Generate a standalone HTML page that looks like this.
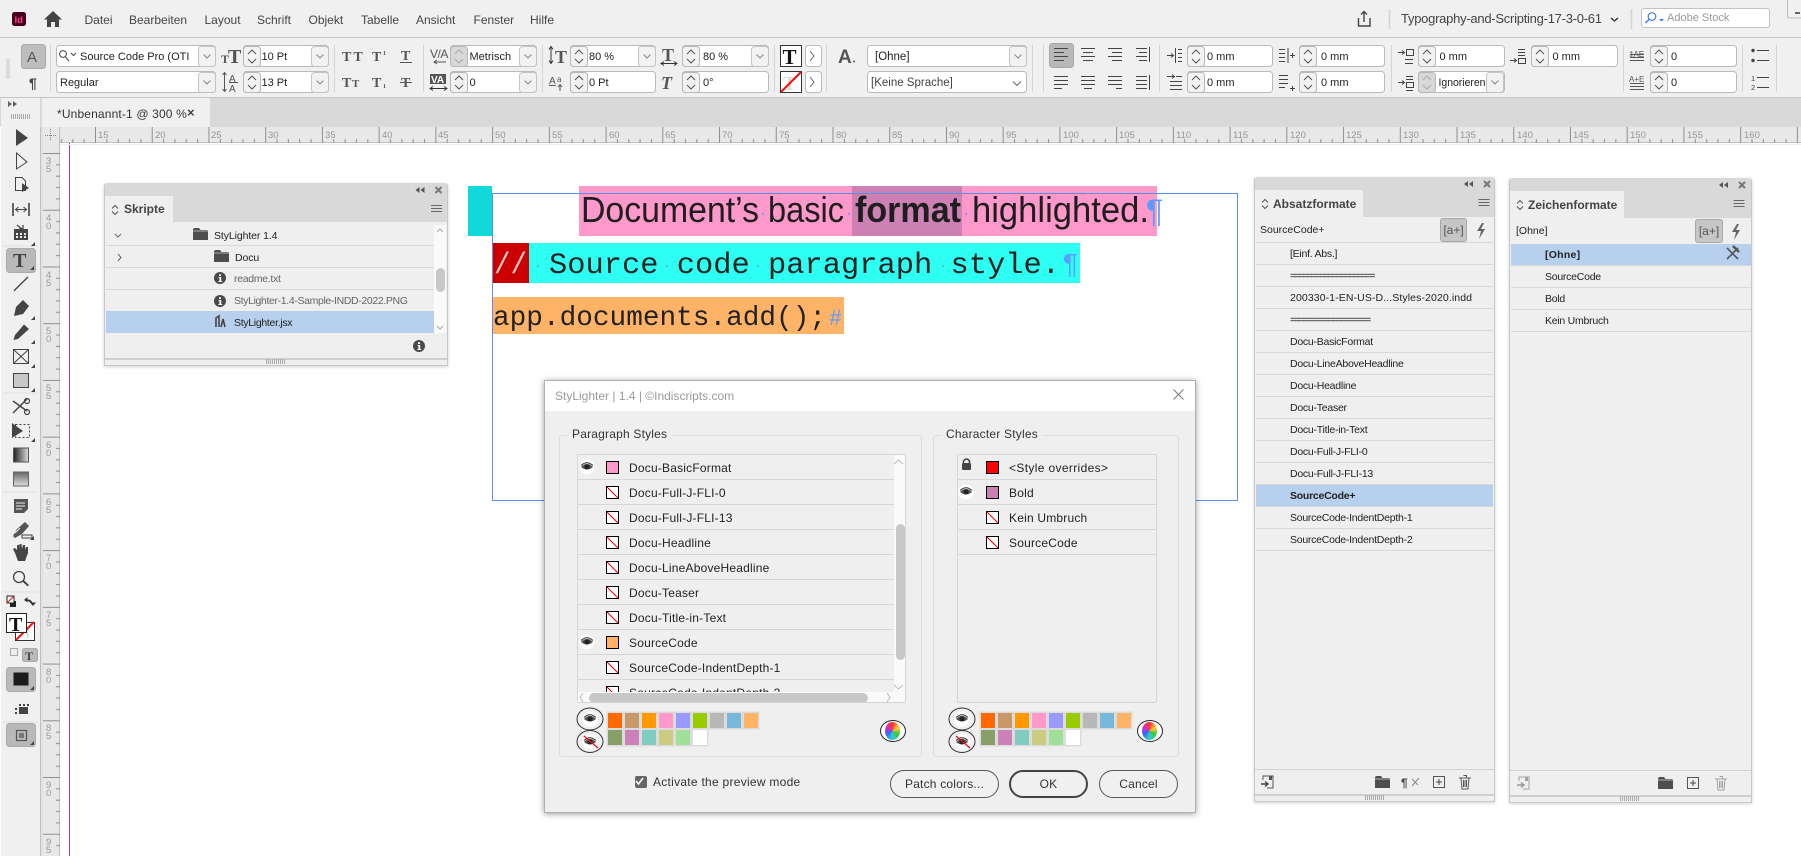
<!DOCTYPE html>
<html lang="de"><head><meta charset="utf-8"><title>InDesign StyLighter</title>
<style>
html,body{margin:0;padding:0}
body{width:1801px;height:856px;position:relative;overflow:hidden;background:#fff;font-family:"Liberation Sans",sans-serif;font-size:11px;color:#222}
.a{position:absolute}
.t{position:absolute;white-space:nowrap;line-height:14px}
#menu{left:0;top:0;width:1801px;height:38px;background:#f0f0f0;border-bottom:1px solid #c9c9c9;box-sizing:border-box}
#menu .t{font-size:12px;color:#444;top:13px}
#ctl{left:0;top:38px;width:1801px;height:60px;background:#f0f0f0;border-bottom:1px solid #c4c4c4;box-sizing:border-box}
#tabs{left:0;top:98px;width:1801px;height:29px;background:#d9d9d9}
#tool{left:1px;top:98px;width:39px;height:758px;background:#f0f0f0}
.panel{position:absolute;background:#efefef;border:1px solid #c8c8c8;border-top:0;border-radius:3px 3px 0 0;box-sizing:border-box;box-shadow:0 1px 3px rgba(0,0,0,.18)}
.head{position:absolute;left:0;right:0;background:#d9d9d9;top:0;border-radius:3px 3px 0 0}
.tab{position:absolute;left:0;background:#efefef;font-weight:bold;color:#444;font-size:12px}
.pl{position:absolute;overflow:hidden}
.pl>div{height:21px;line-height:23px;border-bottom:1px solid #d8d8d8;padding-left:34px;font-size:10.5px;letter-spacing:-.25px;white-space:nowrap;color:#222}
.pl>div.sel{background:#b6d0ee;font-weight:bold}
#dlg{left:544px;top:380px;width:652px;height:433px;background:#efefef;box-shadow:0 1px 6px rgba(0,0,0,.4);border:1px solid #b0b0b0;box-sizing:border-box}
.gb{position:absolute;border:1px solid #dcdcdc;border-radius:3px;box-sizing:border-box}
.lg{position:absolute;background:#efefef;padding:0 5px;font-size:12px;line-height:14px;color:#333;white-space:nowrap;letter-spacing:.2px}
.lst{position:absolute;border:1px solid #d6d6d6;border-radius:2px;box-sizing:border-box;overflow:hidden}
.row{position:relative;height:24px;border-bottom:1px solid #d6d6d6;font-size:12px;line-height:26px;white-space:nowrap;letter-spacing:.2px;color:#222}
.row b{font-weight:normal;position:absolute}
.row i{position:absolute;width:13px;height:13px;border:1px solid #000;box-sizing:border-box;top:6px;background:linear-gradient(to top right,#fff 47%,#f00 47%,#f00 54%,#fff 54%)}
.sw{position:absolute;width:14px;height:15px;box-shadow:0 0 0 1.5px #dcdcdc}
.btn{position:absolute;box-sizing:border-box;height:28px;border:1px solid #555;border-radius:14px;text-align:center;line-height:26px;font-size:12px;color:#333;letter-spacing:.2px;background:#f0f0f0}
.wheel{position:absolute;width:24px;height:22px;border:1px solid #222;border-radius:50%;background:#fff;box-sizing:border-box}
.wheel:after{content:"";position:absolute;left:4px;top:1px;width:15px;height:18px;border-radius:50%;background:conic-gradient(#f33,#fc3,#3c3,#3cc,#36f,#c3c,#f33)}
svg{position:absolute;left:0;top:0}
svg text{font-family:"Liberation Sans",sans-serif}
</style></head><body>

<!-- chrome -->
<div class="a" id="tabs"></div>
<div class="a" id="tool"></div>
<div class="a" style="left:40px;top:127px;width:3px;height:729px;background:#e2e2e2;border-left:1px solid #c0c0c0;box-sizing:border-box"></div>
<div class="a" style="left:43px;top:127px;width:1758px;height:16px;background:#e8e8e8;border-bottom:1px solid #c0c0c0;box-sizing:border-box"></div>
<div class="a" style="left:43px;top:127px;width:17px;height:729px;background:#e8e8e8;border-right:1px solid #c0c0c0;box-sizing:border-box"></div>
<div class="a" style="left:69px;top:143px;width:1px;height:713px;background:#9b3fe0"></div>
<div class="a" style="left:60px;top:144px;width:1741px;height:1px;background:#ececec"></div>
<div class="a" id="menu">
 <span class="t" style="left:84.5px">Datei</span><span class="t" style="left:129px">Bearbeiten</span><span class="t" style="left:204.5px">Layout</span><span class="t" style="left:257px">Schrift</span><span class="t" style="left:308.5px">Objekt</span><span class="t" style="left:361px">Tabelle</span><span class="t" style="left:416px">Ansicht</span><span class="t" style="left:473.5px">Fenster</span><span class="t" style="left:530px">Hilfe</span>
 <span class="t" style="left:1401px;font-size:13px;top:12px;letter-spacing:-.26px">Typography-and-Scripting-17-3-0-61</span>
 <div class="a" style="left:1641px;top:8px;width:129px;height:20px;background:#fff;border:1px solid #c2c2c2;border-radius:3px;box-sizing:border-box"></div>
 <span class="t" style="left:1667px;top:11px;font-size:11px;color:#999">Adobe Stock</span>
</div>
<div class="a" id="ctl"></div>
<div class="a" style="left:42px;top:98px;width:168px;height:29px;background:#f0f0f0"></div>
<span class="t" style="left:57px;top:107px;font-size:12px;color:#333;font-weight:normal;letter-spacing:.15px">*Unbenannt-1 @ 300 %</span>
<span class="t" style="left:187px;top:106px;font-size:13px;color:#444;font-weight:bold">×</span>

<!-- document -->
<svg width="1801" height="856" viewBox="0 0 1801 856">
 <rect x="468" y="186" width="24" height="50" fill="#12d9d9"/>
 <rect x="579" y="186" width="578" height="50" fill="#ff99cc"/>
 <rect x="852" y="186" width="110" height="50" fill="#cc80b3"/>
 <rect x="492" y="243" width="588" height="40" fill="#2dfff2"/>
 <rect x="492" y="243" width="37" height="40" fill="#cc0000"/>
 <rect x="492" y="297" width="352" height="37" fill="#ffb366"/>
 <rect x="492.5" y="193.5" width="745" height="307" fill="none" stroke="#5b8fe8"/>
 <g fill="#1e1e1e" font-size="36.5">
  <text x="581" y="222" textLength="178" lengthAdjust="spacingAndGlyphs">Document’s</text>
  <text x="768" y="222" textLength="76" lengthAdjust="spacingAndGlyphs">basic</text>
  <text x="855" y="222" textLength="106" lengthAdjust="spacingAndGlyphs" font-weight="bold">format</text>
  <text x="972" y="222" textLength="177" lengthAdjust="spacingAndGlyphs">highlighted.</text>
 </g>
 <text x="1146" y="222" font-size="32" fill="#5a9cff">¶</text>
 <g fill="#5a9cff"><circle cx="763" cy="214" r="1"/><circle cx="849" cy="214" r="1"/><circle cx="966" cy="214" r="1"/><circle cx="538" cy="266" r="1"/><circle cx="667" cy="266" r="1"/><circle cx="758" cy="266" r="1"/><circle cx="943" cy="266" r="1"/></g>
 <g font-size="30" fill="#222">
  <text x="494" y="273" style="font-family:'Liberation Mono',monospace" fill="#f0c8c8" textLength="33" lengthAdjust="spacingAndGlyphs">//</text>
  <text x="549" y="273" style="font-family:'Liberation Mono',monospace" textLength="511" lengthAdjust="spacingAndGlyphs">Source code paragraph style.</text>
  <text x="493" y="325" style="font-family:'Liberation Mono',monospace" font-size="28" textLength="333" lengthAdjust="spacingAndGlyphs">app.documents.add();</text>
 </g>
 <text x="1063" y="273" font-size="28" fill="#5a9cff">¶</text>
 <text x="829" y="325" font-size="22" font-style="italic" fill="#5a9cff">#</text>
</svg>

<!-- Skripte panel -->
<div class="panel" style="left:104px;top:183px;width:344px;height:183px">
 <div class="head" style="height:39px"></div>
 <div class="tab" style="top:13px;width:68px;height:26px;line-height:27px;padding-left:19px;box-sizing:border-box">Skripte</div>
 <div class="a" style="left:1px;right:1px;top:42px;height:108px;background:#efefef;border-top:0"></div>
 <div class="a" style="left:1px;top:62px;width:328px;height:1px;background:#d8d8d8"></div>
 <div class="a" style="left:1px;top:84px;width:328px;height:1px;background:#d8d8d8"></div>
 <div class="a" style="left:1px;top:106px;width:328px;height:1px;background:#d8d8d8"></div>
 <div class="a" style="left:1px;top:128px;width:328px;height:22px;background:#b6d0ee"></div>
 <div class="a" style="left:329px;top:42px;width:12px;height:108px;background:#fafafa"></div>
 <div class="a" style="left:331px;top:85px;width:9px;height:24px;background:#c8c8c8;border-radius:5px"></div>
 <div class="a" style="left:0;right:0;top:175px;height:2px;background:#cfcfcf"></div>
 <span class="t" style="left:109px;top:46px;font-size:10.5px;letter-spacing:-.1px">StyLighter 1.4</span>
 <span class="t" style="left:130px;top:68px;font-size:10.5px;letter-spacing:-.1px">Docu</span>
 <span class="t" style="left:129px;top:89px;font-size:10.5px;letter-spacing:-.3px;color:#666">readme.txt</span>
 <span class="t" style="left:129px;top:111px;font-size:10.5px;letter-spacing:-.36px;color:#666">StyLighter-1.4-Sample-INDD-2022.PNG</span>
 <span class="t" style="left:129px;top:133px;font-size:10.5px;letter-spacing:-.3px">StyLighter.jsx</span>
</div>

<!-- Absatzformate -->
<div class="panel" style="left:1254px;top:177px;width:241px;height:625px">
 <div class="head" style="height:40px"></div>
 <div class="tab" style="top:13px;width:108px;height:27px;line-height:28px;padding-left:18px;box-sizing:border-box;white-space:nowrap">Absatzformate</div>
 <span class="t" style="left:5px;top:46px;font-size:10.5px">SourceCode+</span>
 <div class="a" style="left:185px;top:41px;width:27px;height:24px;background:#c6c6c6;border:1px solid #a8a8a8;border-radius:3px;box-sizing:border-box;text-align:center;line-height:22px;font-size:12px;color:#555">[a+]</div>
 <div class="pl" style="left:1px;top:65px;width:237px;height:340px;border-top:1px solid #d8d8d8">
  <div>[Einf. Abs.]</div><div style="letter-spacing:-1.65px;font-size:10px">====================</div><div style="letter-spacing:.1px">200330-1-EN-US-D...Styles-2020.indd</div><div style="letter-spacing:-1.65px;font-size:10px">===================</div><div>Docu-BasicFormat</div><div>Docu-LineAboveHeadline</div><div>Docu-Headline</div><div>Docu-Teaser</div><div>Docu-Title-in-Text</div><div>Docu-Full-J-FLI-0</div><div>Docu-Full-J-FLI-13</div><div class="sel">SourceCode+</div><div>SourceCode-IndentDepth-1</div><div>SourceCode-IndentDepth-2</div>
 </div>
 <div class="a" style="left:0;right:0;top:592px;height:1px;background:#d2d2d2"></div>
 <div class="a" style="left:0;right:0;top:617px;height:2px;background:#cfcfcf"></div>
</div>

<!-- Zeichenformate -->
<div class="panel" style="left:1509px;top:178px;width:243px;height:625px">
 <div class="head" style="height:40px"></div>
 <div class="tab" style="top:13px;width:114px;height:27px;line-height:28px;padding-left:18px;box-sizing:border-box;white-space:nowrap">Zeichenformate</div>
 <span class="t" style="left:6px;top:46px;font-size:10.5px">[Ohne]</span>
 <div class="a" style="left:185px;top:41px;width:28px;height:24px;background:#c6c6c6;border:1px solid #a8a8a8;border-radius:3px;box-sizing:border-box;text-align:center;line-height:22px;font-size:12px;color:#555">[a+]</div>
 <div class="pl" style="left:1px;top:66px;width:240px;height:300px">
  <div class="sel" style="letter-spacing:.25px">[Ohne]</div><div>SourceCode</div><div>Bold</div><div>Kein Umbruch</div>
 </div>
 <div class="a" style="left:0;right:0;top:592px;height:1px;background:#d2d2d2"></div>
 <div class="a" style="left:0;right:0;top:617px;height:2px;background:#cfcfcf"></div>
</div>

<!-- Dialog -->
<div class="a" id="dlg">
 <div class="a" style="left:0;top:0;right:0;height:30px;background:#fff"></div>
 <span class="t" style="left:10px;top:8px;font-size:12px;color:#9a9a9a">StyLighter | 1.4 | ©Indiscripts.com</span>

 <div class="gb" style="left:14px;top:54px;width:363px;height:322px"></div>
 <span class="lg" style="left:22px;top:46px">Paragraph Styles</span>
 <div class="lst" style="left:32px;top:73px;width:329px;height:249px">
  <div class="a" style="left:0;top:0;width:316px;height:237px;overflow:hidden">
   <div class="row"><i style="left:28px;background:#ff99cc"></i><b style="left:51px">Docu-BasicFormat</b></div>
   <div class="row"><i style="left:28px"></i><b style="left:51px">Docu-Full-J-FLI-0</b></div>
   <div class="row"><i style="left:28px"></i><b style="left:51px">Docu-Full-J-FLI-13</b></div>
   <div class="row"><i style="left:28px"></i><b style="left:51px">Docu-Headline</b></div>
   <div class="row"><i style="left:28px"></i><b style="left:51px">Docu-LineAboveHeadline</b></div>
   <div class="row"><i style="left:28px"></i><b style="left:51px">Docu-Teaser</b></div>
   <div class="row"><i style="left:28px"></i><b style="left:51px">Docu-Title-in-Text</b></div>
   <div class="row"><i style="left:28px;background:#ffb366"></i><b style="left:51px">SourceCode</b></div>
   <div class="row"><i style="left:28px"></i><b style="left:51px">SourceCode-IndentDepth-1</b></div>
   <div class="row"><i style="left:28px"></i><b style="left:51px">SourceCode-IndentDepth-2</b></div>
  </div>
  <div class="a" style="left:316px;top:0;width:12px;height:247px;background:#fafafa"></div>
  <div class="a" style="left:0;top:237px;width:328px;height:11px;background:#fafafa"></div>
  <div class="a" style="left:318px;top:69px;width:9px;height:136px;background:#c8c8c8;border-radius:5px"></div>
  <div class="a" style="left:11px;top:238px;width:279px;height:10px;background:#c8c8c8;border-radius:5px"></div>
 </div>
 <div class="sw" style="left:63px;top:332px;background:#ff6a00"></div><div class="sw" style="left:80px;top:332px;background:#c89868"></div><div class="sw" style="left:97px;top:332px;background:#ff9900"></div><div class="sw" style="left:114px;top:332px;background:#ff99cc"></div><div class="sw" style="left:131px;top:332px;background:#9999ff"></div><div class="sw" style="left:148px;top:332px;background:#99cc00"></div><div class="sw" style="left:165px;top:332px;background:#b8b8b8"></div><div class="sw" style="left:182px;top:332px;background:#77b8d8"></div><div class="sw" style="left:199px;top:332px;background:#ffb366"></div>
 <div class="sw" style="left:63px;top:349px;background:#88a068"></div><div class="sw" style="left:80px;top:349px;background:#cc80b8"></div><div class="sw" style="left:97px;top:349px;background:#80ccc0"></div><div class="sw" style="left:114px;top:349px;background:#cccc80"></div><div class="sw" style="left:131px;top:349px;background:#a0e098"></div><div class="sw" style="left:148px;top:349px;background:#fff"></div>
 <div class="wheel" style="left:335px;top:339px;width:26px"></div>

 <div class="gb" style="left:388px;top:54px;width:246px;height:322px"></div>
 <span class="lg" style="left:396px;top:46px">Character Styles</span>
 <div class="lst" style="left:412px;top:73px;width:200px;height:249px">
  <div class="row"><i style="left:28px;background:#f00"></i><b style="left:51px;letter-spacing:.35px">&lt;Style overrides&gt;</b></div>
  <div class="row"><i style="left:28px;background:#cc80b3"></i><b style="left:51px">Bold</b></div>
  <div class="row"><i style="left:28px"></i><b style="left:51px">Kein Umbruch</b></div>
  <div class="row"><i style="left:28px"></i><b style="left:51px">SourceCode</b></div>
 </div>
 <div class="sw" style="left:436px;top:332px;background:#ff6a00"></div><div class="sw" style="left:453px;top:332px;background:#c89868"></div><div class="sw" style="left:470px;top:332px;background:#ff9900"></div><div class="sw" style="left:487px;top:332px;background:#ff99cc"></div><div class="sw" style="left:504px;top:332px;background:#9999ff"></div><div class="sw" style="left:521px;top:332px;background:#99cc00"></div><div class="sw" style="left:538px;top:332px;background:#b8b8b8"></div><div class="sw" style="left:555px;top:332px;background:#77b8d8"></div><div class="sw" style="left:572px;top:332px;background:#ffb366"></div>
 <div class="sw" style="left:436px;top:349px;background:#88a068"></div><div class="sw" style="left:453px;top:349px;background:#cc80b8"></div><div class="sw" style="left:470px;top:349px;background:#80ccc0"></div><div class="sw" style="left:487px;top:349px;background:#cccc80"></div><div class="sw" style="left:504px;top:349px;background:#a0e098"></div><div class="sw" style="left:521px;top:349px;background:#fff"></div>
 <div class="wheel" style="left:592px;top:339px;width:26px"></div>

 <div class="a" style="left:90px;top:395px;width:12px;height:12px;background:#666;border-radius:2px"></div>
 <span class="t" style="left:108px;top:394px;font-size:12px;color:#333;letter-spacing:.27px">Activate the preview mode</span>
 <div class="btn" style="left:345px;top:389px;width:109px">Patch colors...</div>
 <div class="btn" style="left:464px;top:389px;width:79px;border:2px solid #444;line-height:24px">OK</div>
 <div class="btn" style="left:554px;top:389px;width:79px">Cancel</div>
</div>

<!-- graphics overlay -->
<svg width="1801" height="856" viewBox="0 0 1801 856" style="pointer-events:none">
<defs>
 <pattern id="hr" patternUnits="userSpaceOnUse" x="38.27" y="127" width="56.73" height="16">
  <path d="M.5 0V16M11.85 12V16M23.2 12V16M34.5 12V16M45.9 12V16" stroke="#8e8e8e" fill="none"/>
 </pattern>
 <pattern id="vr" patternUnits="userSpaceOnUse" x="43" y="96.27" width="17" height="56.73">
  <path d="M0 .5H17M13 11.85H17M13 23.2H17M13 34.5H17M13 45.9H17" stroke="#8e8e8e" fill="none"/>
 </pattern>
 <symbol id="st" width="18" height="21" overflow="visible"><rect x=".5" y=".5" width="17" height="20" rx="3" fill="#f2f2f2" stroke="#b8b8b8"/><path d="M5 8l4-4 4 4M5 13l4 4 4-4" fill="none" stroke="#555"/></symbol>
 <symbol id="std" width="18" height="21" overflow="visible"><rect x=".5" y=".5" width="17" height="20" rx="3" fill="#d8d8d8" stroke="#b8b8b8"/><path d="M5 8l4-4 4 4M5 13l4 4 4-4" fill="none" stroke="#aaa"/></symbol>
 <symbol id="dd" width="18" height="21" overflow="visible"><rect x=".5" y=".5" width="17" height="20" rx="3" fill="#f2f2f2" stroke="#c4c4c4"/><path d="M5.500 8.500l3.500 3.500 3.500-3.500" fill="none" stroke="#888"/></symbol>
 <symbol id="fly" width="5" height="5" overflow="visible"><path d="M4 0V4H0Z" fill="#444"/></symbol>
 <symbol id="eye" width="16" height="16" overflow="visible"><circle cx="8" cy="8" r="7.5" fill="#fff"/><path d="M2 8Q8 1.500 14 8Q8 13 2 8Z" fill="#555"/><path d="M2 6.500Q8 1 14 6.500" fill="none" stroke="#333"/><ellipse cx="8" cy="8" rx="2.600" ry="2.300" fill="#222"/></symbol>
 <symbol id="fold" width="15" height="13" overflow="visible"><path d="M0 2Q0 0 2 0H6L7.500 2H14Q15 2 15 3V12H0Z" fill="#4e4e4e"/><path d="M0 3H15" stroke="#eee" stroke-width=".6"/></symbol>
 <symbol id="inf" width="12" height="12" overflow="visible"><circle cx="6" cy="6" r="6" fill="#4a4a4a"/><path d="M5 2.200h2v1.800H5zM4.600 5h2.600v4h1v1H4.400V9h1V6H4.600z" fill="#fff"/></symbol>
 <symbol id="hd" width="12" height="9" overflow="visible"><path d="M0 .5H11M0 3.500H11M0 6.500H11" stroke="#666" fill="none"/></symbol>
 <symbol id="hx" width="36" height="10" overflow="visible"><path d="M4 2L0 5L4 8ZM9 2L5 5L9 8Z" fill="#555"/><path d="M20 2L26 8M26 2L20 8" stroke="#777" stroke-width="2"/></symbol>
 <symbol id="ud" width="8" height="12" overflow="visible"><path d="M1 4.500L4 1.500L7 4.500M1 7.500L4 10.500L7 7.500" fill="none" stroke="#555"/></symbol>
 <symbol id="grip" width="20" height="5" overflow="visible"><path d="M.5 0V5M2.500 0V5M4.500 0V5M6.500 0V5M8.500 0V5M10.500 0V5M12.500 0V5M14.500 0V5M16.500 0V5M18.500 0V5" stroke="#aaa"/></symbol>
 <symbol id="tr" width="14" height="15" overflow="visible"><path d="M1 3H13M3 3L4 14H10L11 3M5.500 0.500H8.500V3M5.500 5V12M7 5V12M8.500 5V12" fill="none" stroke="#555"/></symbol>
 <symbol id="nw" width="12" height="12" overflow="visible"><rect x=".5" y=".5" width="11" height="11" fill="none" stroke="#555"/><path d="M6 3V9M3 6H9" stroke="#444"/></symbol>
 <symbol id="ld" width="14" height="14" overflow="visible"><path d="M2 5V1H12V13H6" fill="none" stroke="#555"/><path d="M0 9H6M4 6.500L7 9L4 11.500" fill="none" stroke="#444" stroke-width="1.400"/><path d="M8 1h3v4h-3z" fill="#555"/></symbol>
 <symbol id="bolt" width="10" height="16" overflow="visible"><path d="M6 0L1 8H5L3 16L9 6H5L8 0Z" fill="#666"/></symbol>
</defs>

<!-- rulers -->
<rect x="60" y="127" width="1741" height="16" fill="url(#hr)"/>
<rect x="43" y="143" width="17" height="713" fill="url(#vr)"/>
<path d="M50.500 129V141M45 135.500H56" stroke="#888" stroke-dasharray="1 1" fill="none"/>
<g font-size="9.5" fill="#969696">
<text x="98" y="138">15</text><text x="155" y="138">20</text><text x="211" y="138">25</text><text x="268" y="138">30</text><text x="325" y="138">35</text><text x="382" y="138">40</text><text x="438" y="138">45</text><text x="495" y="138">50</text><text x="552" y="138">55</text><text x="609" y="138">60</text><text x="665" y="138">65</text><text x="722" y="138">70</text><text x="779" y="138">75</text><text x="836" y="138">80</text><text x="892" y="138">85</text><text x="949" y="138">90</text><text x="1006" y="138">95</text><text x="1063" y="138">100</text><text x="1119" y="138">105</text><text x="1176" y="138">110</text><text x="1233" y="138">115</text><text x="1290" y="138">120</text><text x="1346" y="138">125</text><text x="1403" y="138">130</text><text x="1460" y="138">135</text><text x="1517" y="138">140</text><text x="1573" y="138">145</text><text x="1630" y="138">150</text><text x="1687" y="138">155</text><text x="1744" y="138">160</text>
</g>
<g font-size="9.5" fill="#a0968c">
<text x="46" y="164">3</text><text x="46" y="172">5</text><text x="46" y="221">4</text><text x="46" y="229">0</text><text x="46" y="278">4</text><text x="46" y="286">5</text><text x="46" y="334">5</text><text x="46" y="342">0</text><text x="46" y="391">5</text><text x="46" y="399">5</text><text x="46" y="448">6</text><text x="46" y="456">0</text><text x="46" y="505">6</text><text x="46" y="513">5</text><text x="46" y="561">7</text><text x="46" y="569">0</text><text x="46" y="618">7</text><text x="46" y="626">5</text><text x="46" y="675">8</text><text x="46" y="683">0</text><text x="46" y="731">8</text><text x="46" y="739">5</text><text x="46" y="788">9</text><text x="46" y="796">0</text><text x="46" y="845">9</text><text x="46" y="853">5</text>
</g>

<!-- menu bar icons -->
<rect x="12" y="12" width="14" height="14" rx="2.500" fill="#49021f"/>
<text x="14.5" y="23" font-size="9.5" fill="#ff3d7f" font-weight="bold">Id</text>
<path d="M53 11L44 19.500H47V27H51V22H55V27H59V19.500H62Z" fill="#444"/>
<path d="M1358.500 18V26H1370V18M1364 22V12M1361 14.500L1364 11.500L1367 14.500" fill="none" stroke="#444" stroke-width="1.400"/>
<path d="M1389.500 9V29M1631.500 9V29" stroke="#d4d4d4" stroke-width="1.600"/>
<path d="M1611 18L1614.500 21L1618 18" fill="none" stroke="#333" stroke-width="1.400"/>
<circle cx="1652" cy="16.500" r="3.800" fill="none" stroke="#3a7fe0" stroke-width="1.200"/><path d="M1649 19.500L1645.500 23" stroke="#3a7fe0" stroke-width="1.400"/><path d="M1659 19L1664 19L1661.500 21.500Z" fill="#3a7fe0"/>
<path d="M1787.500 0V16Q1787.500 18 1790 18H1801" fill="none" stroke="#bbb"/><path d="M1795 13H1800" stroke="#444" stroke-width="1.600"/>

<!-- control panel -->
<path d="M6 60H10M6 62H10M6 64H10M6 66H10M6 68H10M6 70H10M6 72H10M6 74H10M6 76H10M6 78H10" stroke="#c8c8c8"/>
<rect x="21.5" y="44.5" width="24" height="24" rx="3" fill="#bdbdbd" stroke="#a8a8a8"/>
<text x="27" y="62" font-size="15" fill="#555">A</text>
<text x="29" y="88" font-size="14" fill="#444" font-weight="bold">¶</text>
<path stroke="#d4d4d4" d="M50.500 45V92M334.500 45V92M423.500 45V92M542.500 45V92M774.500 45V92M826.500 45V92M1032.500 45V92M1043.500 45V92M1159.500 45V92M1391.500 45V92M1623.500 45V92M1742.500 45V92M1776.500 45V92"/>
<g fill="#fff" stroke="#bababa">
 <rect x="56.500" y="45.500" width="159" height="21" rx="3"/><rect x="56.500" y="71.500" width="159" height="21" rx="3"/>
 <rect x="243.500" y="45.500" width="85" height="21" rx="3"/><rect x="243.500" y="71.500" width="85" height="21" rx="3"/>
 <rect x="450.500" y="45.500" width="86" height="21" rx="3"/><rect x="450.500" y="71.500" width="86" height="21" rx="3"/>
 <rect x="570.500" y="45.500" width="85" height="21" rx="3"/><rect x="570.500" y="71.500" width="85" height="21" rx="3"/>
 <rect x="682.500" y="45.500" width="86" height="21" rx="3"/><rect x="682.500" y="71.500" width="86" height="21" rx="3"/>
 <rect x="867.500" y="45.500" width="159" height="21" rx="3"/><rect x="867.500" y="71.500" width="159" height="21" rx="3"/>
 <rect x="1187.500" y="45.500" width="85" height="21" rx="3"/><rect x="1187.500" y="71.500" width="85" height="21" rx="3"/>
 <rect x="1299.500" y="45.500" width="85" height="21" rx="3"/><rect x="1299.500" y="71.500" width="85" height="21" rx="3"/>
 <rect x="1418.500" y="45.500" width="86" height="21" rx="3"/><rect x="1418.500" y="71.500" width="86" height="21" rx="3"/>
 <rect x="1531.500" y="45.500" width="86" height="21" rx="3"/>
 <rect x="1650.500" y="45.500" width="86" height="21" rx="3"/><rect x="1650.500" y="71.500" width="86" height="21" rx="3"/>
 <rect x="780.500" y="45.500" width="21" height="21" fill="#fff" stroke="#333"/><rect x="780.500" y="71.500" width="21" height="21" fill="#fff" stroke="#333"/>
 <rect x="805.500" y="45.500" width="16" height="21" rx="3"/><rect x="805.500" y="71.500" width="16" height="21" rx="3"/>
</g>
<use href="#dd" x="198" y="46"/><use href="#dd" x="198" y="72"/>
<use href="#st" x="243" y="46"/><use href="#st" x="243" y="72"/><use href="#dd" x="311" y="46"/><use href="#dd" x="311" y="72"/>
<use href="#std" x="450" y="46"/><use href="#st" x="450" y="72"/><use href="#dd" x="519" y="46"/><use href="#dd" x="519" y="72"/>
<use href="#st" x="570" y="46"/><use href="#st" x="570" y="72"/><use href="#dd" x="638" y="46"/>
<use href="#st" x="682" y="46"/><use href="#st" x="682" y="72"/><use href="#dd" x="751" y="46"/>
<use href="#dd" x="1009" y="46"/>
<path d="M1013 81.500l4 4 4-4" fill="none" stroke="#666"/>
<use href="#st" x="1187" y="46"/><use href="#st" x="1187" y="72"/><use href="#st" x="1299" y="46"/><use href="#st" x="1299" y="72"/>
<use href="#st" x="1418" y="46"/><use href="#std" x="1418" y="72"/><use href="#dd" x="1486" y="72"/>
<use href="#st" x="1531" y="46"/><use href="#st" x="1650" y="46"/><use href="#st" x="1650" y="72"/>
<path d="M810 51l4 5-4 5M810 77l4 5-4 5" fill="none" stroke="#666"/>

<g font-size="11" fill="#222">
 <text x="80" y="60">Source Code Pro (OTI</text>
 <text x="60" y="86">Regular</text>
 <text x="261.5" y="60">10 Pt</text><text x="261.5" y="86">13 Pt</text>
 <text x="469.5" y="60">Metrisch</text><text x="469.5" y="86">0</text>
 <text x="589" y="60">80 %</text><text x="589" y="86">0 Pt</text>
 <text x="703" y="60">80 %</text><text x="703" y="86">0°</text>
 <text x="875" y="60" font-size="11.500">[Ohne]</text>
 <text x="871" y="86" font-size="11.500" fill="#444">[Keine Sprache]</text>
 <text x="1207" y="60">0 mm</text><text x="1207" y="86">0 mm</text>
 <text x="1321" y="60">0 mm</text><text x="1321" y="86">0 mm</text>
 <text x="1439.5" y="60">0 mm</text><text x="1438.5" y="86" textLength="47" lengthAdjust="spacingAndGlyphs">Ignorieren</text>
 <text x="1552.5" y="60">0 mm</text>
 <text x="1671" y="60">0</text><text x="1671" y="86">0</text>
</g>
<circle cx="63" cy="54" r="3.400" fill="none" stroke="#444"/><path d="M65.500 57L69 61M71 53l2.500 2.500L76 53" fill="none" stroke="#444"/>

<g fill="#555">
 <text x="221" y="63" font-size="12" font-weight="bold" style="font-family:'Liberation Serif',serif">T</text><text x="228" y="63" font-size="20" font-weight="bold" style="font-family:'Liberation Serif',serif">T</text>
 <g font-size="14" font-weight="bold">
  <text x="342" y="61" style="font-family:'Liberation Serif',serif" letter-spacing="2">TT</text>
  <text x="372" y="61" style="font-family:'Liberation Serif',serif">T</text><text x="383" y="55" font-size="6" style="font-family:'Liberation Serif',serif">1</text>
  <text x="401" y="60" style="font-family:'Liberation Serif',serif">T</text>
  <text x="342" y="87" style="font-family:'Liberation Serif',serif" letter-spacing="1">T</text><text x="352" y="87" style="font-family:'Liberation Serif',serif" font-size="11">T</text>
  <text x="372" y="87" style="font-family:'Liberation Serif',serif">T</text><text x="383" y="88" font-size="6" style="font-family:'Liberation Serif',serif">1</text>
  <text x="401" y="87" style="font-family:'Liberation Serif',serif">T</text>
 </g>
 <path d="M400 62.500H412M400 82.500H412" stroke="#555" fill="none"/>
 <text x="229" y="82" font-size="10">A</text><text x="229" y="92" font-size="10">A</text><path d="M229 82.500H238M224.500 73V91M222.500 75L224.500 72.500L226.500 75M222.500 89L224.500 91.500L226.500 89" fill="none" stroke="#555"/>
 <text x="430" y="58" font-size="12" letter-spacing="-.5">V/A</text><path d="M434 62H446M437 60L434 62L437 64" fill="none" stroke="#555"/>
 <rect x="430" y="74" width="16" height="10" fill="#555"/><text x="431" y="83" font-size="10" font-weight="bold" fill="#fff">VA</text><path d="M430 88.500H447M433 86.500L430 88.500L433 90.500M444 86.500L447 88.500L444 90.500" fill="none" stroke="#333"/>
 <text x="555" y="63" font-size="18" font-weight="bold" style="font-family:'Liberation Serif',serif">T</text><path d="M551 47V63M549 49.500L551 46.500L553 49.500M549 60.500L551 63.500L553 60.500" fill="none" stroke="#333"/>
 <text x="549" y="84" font-size="10" text-decoration="underline">A</text><text x="557" y="82" font-size="8">a</text><path d="M560 85V91M558 87L560 84.500L562 87" fill="none" stroke="#555"/>
 <text x="662" y="61" font-size="18" font-weight="bold" style="font-family:'Liberation Serif',serif">T</text><path d="M661 63.500H677M664 61.500L661 63.500L664 65.500M674 61.500L677 63.500L674 65.500" fill="none" stroke="#333"/>
 <text x="661" y="89" font-size="18" font-weight="bold" font-style="italic" style="font-family:'Liberation Serif',serif">T</text>
</g>
<text x="782.5" y="64" font-size="21" font-weight="bold" fill="#111" style="font-family:'Liberation Serif',serif">T</text>
<text x="783" y="90" font-size="20" font-weight="bold" fill="#ddd" style="font-family:'Liberation Serif',serif">T</text>
<path d="M781 92L801 72" stroke="#e11" stroke-width="2"/>
<text x="838" y="63" font-size="19" fill="#555" font-weight="bold">A</text><path d="M853 61.500H855" stroke="#555" stroke-width="1.500"/>

<rect x="1049.5" y="43.5" width="24" height="24" rx="3" fill="#b8b8b8" stroke="#a8a8a8"/>
<g stroke="#444" fill="none">
 <path d="M1054 48.500H1068M1054 52.500H1064M1054 56.500H1068M1054 60.500H1064"/>
 <path d="M1081 48.500H1095M1083 52.500H1093M1081 56.500H1095M1083 60.500H1093"/>
 <path d="M1108 48.500H1122M1112 52.500H1122M1108 56.500H1122M1112 60.500H1122"/>
 <path d="M1136 48.500H1147M1139 52.500H1147M1136 56.500H1147M1139 60.500H1147M1149.500 47V62"/>
 <path d="M1054 76.500H1068M1054 80.500H1068M1054 84.500H1068M1054 88.500H1062"/>
 <path d="M1081 76.500H1095M1081 80.500H1095M1081 84.500H1095M1084 88.500H1092"/>
 <path d="M1108 76.500H1122M1108 80.500H1122M1108 84.500H1122M1116 88.500H1122"/>
 <path d="M1136 76.500H1147M1136 80.500H1147M1136 84.500H1147M1136 88.500H1147M1149.500 75V90"/>
 <path d="M1167 55.500H1173M1171 53.500L1173.500 55.500L1171 57.500M1175.500 48V63M1178 49.500H1182M1178 53.500H1182M1178 57.500H1182M1178 61.500H1182"/>
 <path d="M1167 76.500H1174M1172 74.500L1174.500 76.500L1172 78.500M1176 76.500H1182M1170 81.500H1182M1170 85.500H1182M1170 89.500H1182"/>
 <path d="M1279 49.500H1285M1279 53.500H1285M1279 57.500H1285M1279 61.500H1285M1288 48V63M1290 55.500H1295M1292.500 53V58"/>
 <path d="M1279 75.500H1288M1279 79.500H1288M1279 83.500H1288M1279 87.500H1285M1290 88.500H1295M1292.500 86V91"/>
 <path d="M1398 52.500H1404M1402 50.500L1404.500 52.500L1402 54.500"/><rect x="1406.5" y="49.5" width="7" height="6"/><path d="M1405 59.500H1413M1405 63.500H1413"/>
 <path d="M1398 82.500H1404M1402 80.500L1404.500 82.500L1402 84.500M1406 76.500H1413M1406 79.500H1413"/><rect x="1406.5" y="82.5" width="7" height="5"/><path d="M1406 90.500H1413"/>
 <path d="M1510 60.500H1516M1514 58.500L1516.500 60.500L1514 62.500"/><path d="M1518 49.500H1525M1518 52.500H1525M1518 55.500H1525"/><rect x="1518.5" y="58.5" width="7" height="5"/>
 <path d="M1630 54.500H1644M1630 57.500H1644M1630 60.500H1644" stroke="#555"/><path d="M1630 83.500H1644M1630 86.500H1644M1630 89.500H1644" stroke="#555"/>
 <path d="M1757 50.500H1769M1757 60.500H1769M1757 77.500H1769M1757 87.500H1769" stroke="#444"/>
</g>
<text x="1629" y="57" font-size="8" fill="#555">‡AE</text><text x="1629" y="82" font-size="8" fill="#555">A+E</text>
<circle cx="1753" cy="50.500" r="1.700" fill="#444"/><circle cx="1753" cy="60.500" r="1.700" fill="#444"/>
<text x="1751" y="81" font-size="7.5" fill="#444">1</text><text x="1751" y="90" font-size="7.5" fill="#444">2</text>

<!-- tabs -->
<path d="M8 101L12 104L8 107ZM13 101L17 104L13 107Z" fill="#666"/>
<use href="#grip" x="11" y="114"/>

<!-- tools -->
<path d="M3 246H38M3 393H38M3 492H38M3 592H38M3 722H38" stroke="#e0e0e0" fill="none"/>
<g fill="#444" stroke="none">
 <path d="M16 129L28 138L16 146Z"/>
 <path d="M16.500 153L27 162L16.500 169Z" fill="#f0f0f0" stroke="#444"/>
 <path d="M15.500 177.500H22L25.500 181V190.500H15.500Z" fill="#f0f0f0" stroke="#444"/><path d="M22 183L29 188L22 192Z"/>
 <path d="M13 203V216M29 203V216" stroke="#444" stroke-width="1.600"/><path d="M16 209.500H26M18.500 207L15.500 209.500L18.500 212M23.500 207L26.500 209.500L23.500 212" fill="none" stroke="#444"/>
 <path d="M14 229H28V240H14Z"/><path d="M16 233h2v2h-2zM20 233h2v2h-2zM24 233h2v2h-2zM16 236h2v2h-2zM20 236h2v2h-2zM24 236h2v2h-2z" fill="#f0f0f0"/><path d="M17 225L22 229M19 229H23V225" fill="none" stroke="#444" stroke-width="1.300"/>
 <rect x="6.5" y="248.5" width="29" height="24" rx="3" fill="#b9b9b9" stroke="#aaa"/>
 <text x="13" y="267" font-size="20" font-weight="bold" style="font-family:'Liberation Serif',serif">T</text>
 <path d="M14 290.700L28 277" stroke="#444" stroke-width="1.400"/>
 <path d="M23 300L29 306L23 314L14 316L16 307Z"/>
 <path d="M24 324.500L29 329L18 339L13.500 340L15 335Z"/>
 <rect x="13.5" y="349.5" width="15" height="14" fill="none" stroke="#444"/><path d="M13.500 349.500L28.500 363.500M28.500 349.500L13.500 363.500" stroke="#444"/>
 <rect x="13.5" y="373.5" width="15" height="14" fill="#c8c8c8" stroke="#444"/>
 <path d="M13 401L27 411M13 413L27 399" stroke="#444" stroke-width="1.500"/><circle cx="27" cy="401" r="2.500" fill="none" stroke="#444" stroke-width="1.200"/><circle cx="27" cy="412" r="2.500" fill="none" stroke="#444" stroke-width="1.200"/>
 <path d="M12 423L23 431L12 438Z"/><rect x="15.5" y="424.5" width="14" height="13" fill="none" stroke="#444" stroke-dasharray="2 2"/>
</g>
<defs><linearGradient id="g1" x1="0" x2="1"><stop offset="0" stop-color="#222"/><stop offset="1" stop-color="#ddd"/></linearGradient><linearGradient id="g2" x1="0" x2="0" y1="0" y2="1"><stop offset="0" stop-color="#666"/><stop offset="1" stop-color="#ddd"/></linearGradient></defs>
<rect x="13.5" y="448" width="15" height="14" fill="url(#g1)" stroke="#555"/>
<rect x="13.5" y="472" width="15" height="14" fill="url(#g2)" stroke="#666"/>
<g fill="#444">
 <path d="M14 499H28V509L24 513H14Z" fill="#555"/><path d="M16 503H25M16 506H25M16 509H22" stroke="#f0f0f0"/>
 <path d="M25 522L29 526L22 534L15 538L13 536L17 529Z" fill="#555"/><path d="M15 533L20 528" stroke="#f0f0f0"/><path d="M22 535H32V538H22Z" fill="none" stroke="#444"/>
 <path d="M15 553L13 549L15 548L17 550V545H19V549L19.500 544H21.500L22 549L23 545H25V550L26 547H28V553L25 561H18Z"/>
 <circle cx="19" cy="577" r="5.500" fill="none" stroke="#444" stroke-width="1.300"/><path d="M23.300 581L28.300 585.700" stroke="#444" stroke-width="2"/>
 <rect x="10" y="601" width="6" height="6" fill="#222"/><rect x="7" y="596" width="7" height="7" fill="#fff" stroke="#222"/><path d="M7 603L14 596" stroke="#e11"/>
 <path d="M26 600Q31 598 33 604M24 600L27.500 597V602.500ZM33 606L30 602.500H36Z" fill="#333"/>
 <rect x="15.5" y="622.5" width="19" height="18" fill="#fff" stroke="#333"/><text x="24" y="638" font-size="12" fill="#ccc">T</text><path d="M16 640L34 622" stroke="#e11" stroke-width="2"/>
 <rect x="6.5" y="613.5" width="20" height="19" fill="#fff" stroke="#222"/><text x="9" y="631" font-size="20" font-weight="bold" fill="#111" style="font-family:'Liberation Serif',serif">T</text>
 <rect x="10.5" y="648.5" width="7" height="7" fill="#eee" stroke="#aaa"/>
 <rect x="22.5" y="648.5" width="15" height="13" rx="2" fill="#b9b9b9" stroke="#aaa"/><text x="25" y="660" font-size="12" font-weight="bold" style="font-family:'Liberation Serif',serif">T</text>
 <rect x="6.5" y="667.5" width="29" height="24" rx="3" fill="#b9b9b9" stroke="#aaa"/><rect x="13.5" y="672.5" width="15" height="13" fill="#1b1b1b"/>
 <rect x="19" y="707" width="9" height="7" fill="#444"/><path d="M15 708h2v2h-2zM15 712h2v2h-2zM19 704h2v2h-2zM23 704h2v2h-2zM27 704h2v2h-2z"/>
 <rect x="6.5" y="723.5" width="29" height="23" rx="3" fill="#b9b9b9" stroke="#aaa"/><rect x="16.5" y="730.5" width="10" height="10" fill="none" stroke="#555" stroke-width="1.200"/><path d="M19 733H24V738H19Z" fill="#777"/>
</g>
<use href="#fly" x="31" y="242"/><use href="#fly" x="30" y="266"/><use href="#fly" x="31" y="316"/><use href="#fly" x="31" y="340"/><use href="#fly" x="31" y="364"/><use href="#fly" x="31" y="388"/><use href="#fly" x="31" y="438"/><use href="#fly" x="30" y="536"/><use href="#fly" x="30" y="686"/><use href="#fly" x="30" y="741"/>

<!-- Skripte icons -->
<use href="#hx" x="415.5" y="185"/><use href="#hd" x="431" y="205"/><use href="#ud" x="111" y="204"/>
<use href="#fold" x="193" y="228"/><use href="#fold" x="214" y="250"/>
<use href="#inf" x="214" y="272"/><use href="#inf" x="214" y="295"/><use href="#inf" x="413" y="340"/>
<path d="M115 234L118 237L121 234M118 254L121 257.500L118 261" fill="none" stroke="#666"/>
<path d="M437 232L440 229L443 232M437 326L440 329L443 326" fill="none" stroke="#aaa"/>
<path d="M216 327V318L219 316V327M221 327L223 319L225 327" fill="none" stroke="#444" stroke-width="1.600"/>
<use href="#grip" x="266" y="359"/>

<!-- Format panels icons -->
<use href="#hx" x="1464" y="179"/><use href="#hd" x="1478.5" y="199"/><use href="#ud" x="1261" y="198"/><use href="#bolt" x="1476" y="223"/>
<use href="#hx" x="1719" y="180"/><use href="#hd" x="1733.5" y="200"/><use href="#ud" x="1516" y="199"/><use href="#bolt" x="1731" y="224"/>
<path d="M1727 248L1738 259M1738 248L1727 259" stroke="#555" stroke-width="1.600"/><path d="M1733 246L1739 252" stroke="#555" stroke-width="2.400"/>
<use href="#ld" x="1261" y="775"/><use href="#fold" x="1375" y="776"/><use href="#nw" x="1433" y="776"/><use href="#tr" x="1458" y="775"/>
<text x="1401" y="787" font-size="12" font-weight="bold" fill="#444">¶</text><path d="M1412 786L1419 778M1412 779L1418 785" stroke="#888"/>
<use href="#grip" x="1365" y="795"/>
<g opacity=".5"><use href="#ld" x="1517" y="776"/></g><use href="#fold" x="1658" y="777"/><use href="#nw" x="1687" y="777"/><g opacity=".5"><use href="#tr" x="1714" y="776"/></g>
<use href="#grip" x="1620" y="796"/>

<!-- Dialog icons -->
<path d="M1173.500 389.500L1183.500 399.500M1183.500 389.500L1173.500 399.500" stroke="#777" stroke-width="1"/>
<use href="#eye" x="579" y="459"/><use href="#eye" x="579" y="634"/>
<path d="M894 464L898.500 460L903 464" fill="none" stroke="#bbb"/><path d="M894 685L898.500 689L903 685" fill="none" stroke="#bbb"/>
<path d="M583 693L580 697.500L583 702M887 693L890 697.500L887 702" fill="none" stroke="#bbb"/>
<rect x="962" y="463" width="9" height="7" rx="1" fill="#444"/><path d="M963.500 463V461Q966.500 457 969.500 461V463" fill="none" stroke="#444" stroke-width="1.500"/>
<use href="#eye" x="958" y="484"/>
<g fill="#f0f0f0" stroke="#333"><ellipse cx="590" cy="719" rx="13" ry="11"/><ellipse cx="590" cy="741.500" rx="13" ry="11"/><ellipse cx="962" cy="719" rx="13" ry="11"/><ellipse cx="962" cy="741.500" rx="13" ry="11"/></g>
<use href="#eye" x="582" y="711"/><use href="#eye" x="954" y="711"/><use href="#eye" x="582" y="734"/><use href="#eye" x="954" y="734"/>
<path d="M584 736L598 748M956 736L970 748" stroke="#e11" stroke-width="1.300"/>
<path d="M636 781L638.500 784L643 778" fill="none" stroke="#fff" stroke-width="1.500"/>
</svg>
</body></html>
